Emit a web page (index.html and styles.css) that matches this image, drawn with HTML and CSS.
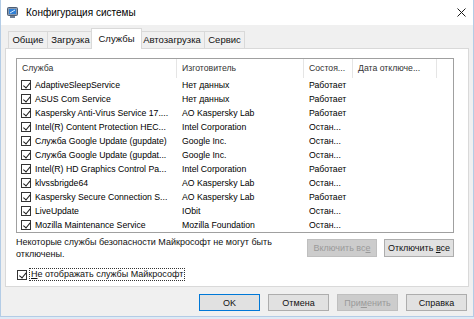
FILE: index.html
```html
<!DOCTYPE html>
<html lang="ru">
<head>
  <meta charset="UTF-8" />
  <meta name="viewport" content="width=device-width, initial-scale=1.0" />
  <title>Конфигурация системы</title>
  <link rel="stylesheet" href="styles.css">
</head>
<body>
  <div class="window">
    <div class="titlebar">
      <svg class="app-icon" width="11" height="11" viewBox="0 0 11 11">
        <rect x="0.5" y="0.5" width="10" height="8" rx="1" fill="#8a9bb0" stroke="#4d5d73"/>
        <rect x="2" y="2" width="7" height="5" fill="#2f7fd6"/>
        <path d="M3 6 L8 3" stroke="#d7ecff" stroke-width="1"/>
        <rect x="3" y="9" width="5" height="2" fill="#6f7f95"/>
      </svg>
      <span class="title">Конфигурация системы</span>
      <svg class="close" width="9" height="9" viewBox="0 0 9 9">
        <path d="M0.5 0.5 L8.5 8.5 M8.5 0.5 L0.5 8.5" stroke="#1a1a1a" stroke-width="1"/>
      </svg>
    </div>

    <div class="content">
      <div class="tabs">
        <div class="tab t-general">Общие</div>
        <div class="tab t-boot">Загрузка</div>
        <div class="tab t-services active">Службы</div>
        <div class="tab t-startup">Автозагрузка</div>
        <div class="tab t-tools">Сервис</div>
      </div>

      <div class="panel">
        <div class="listbox">
          <div class="list-head">
            <div class="col">Служба</div>
            <div class="col">Изготовитель</div>
            <div class="col">Состоя...</div>
            <div class="col">Дата отключе...</div>
            <div class="col last"></div>
          </div>
          <div class="row"><div class="cell name"><span class="check"></span>AdaptiveSleepService</div><div class="cell">Нет данных</div><div class="cell">Работает</div></div>
          <div class="row"><div class="cell name"><span class="check"></span>ASUS Com Service</div><div class="cell">Нет данных</div><div class="cell">Работает</div></div>
          <div class="row"><div class="cell name"><span class="check"></span>Kaspersky Anti-Virus Service 17....</div><div class="cell">AO Kaspersky Lab</div><div class="cell">Работает</div></div>
          <div class="row"><div class="cell name"><span class="check"></span>Intel(R) Content Protection HEC...</div><div class="cell">Intel Corporation</div><div class="cell">Остан...</div></div>
          <div class="row"><div class="cell name"><span class="check"></span>Служба Google Update (gupdate)</div><div class="cell">Google Inc.</div><div class="cell">Остан...</div></div>
          <div class="row"><div class="cell name"><span class="check"></span>Служба Google Update (gupdat...</div><div class="cell">Google Inc.</div><div class="cell">Остан...</div></div>
          <div class="row"><div class="cell name"><span class="check"></span>Intel(R) HD Graphics Control Pa...</div><div class="cell">Intel Corporation</div><div class="cell">Работает</div></div>
          <div class="row"><div class="cell name"><span class="check"></span>klvssbrigde64</div><div class="cell">AO Kaspersky Lab</div><div class="cell">Остан...</div></div>
          <div class="row"><div class="cell name"><span class="check"></span>Kaspersky Secure Connection S...</div><div class="cell">AO Kaspersky Lab</div><div class="cell">Работает</div></div>
          <div class="row"><div class="cell name"><span class="check"></span>LiveUpdate</div><div class="cell">IObit</div><div class="cell">Остан...</div></div>
          <div class="row"><div class="cell name"><span class="check"></span>Mozilla Maintenance Service</div><div class="cell">Mozilla Foundation</div><div class="cell">Остан...</div></div>
        </div>

        <div class="note-row">
          <div class="note">Некоторые службы безопасности Майкрософт не могут быть отключены.</div>
          <div class="note-buttons">
            <div class="btn disabled"><span>Включить вс<u>е</u></span></div>
            <div class="btn"><span>Отключить <u>в</u>се</span></div>
          </div>
        </div>

        <div class="hide-ms">
          <span class="check"></span>
          <span class="focus-label"><u>Н</u>е отображать службы Майкрософт</span>
        </div>
      </div>

      <div class="dialog-buttons">
        <div class="btn wide default"><span>OK</span></div>
        <div class="btn wide"><span>Отмена</span></div>
        <div class="btn wide disabled"><span>При<u>м</u>енить</span></div>
        <div class="btn wide"><span>Справка</span></div>
      </div>
    </div>
  </div>
</body>
</html>
```

FILE: styles.css
```css
body {
  margin: 0;
  background: #dfeaf5;
  font-family: 'Liberation Sans', Arial, sans-serif;
  color: #000;
}
.window {
  width: 472px;
  height: 316px;
  border: 1px solid #b3cce6;
  border-top: none;
  background: #f0f0f0;
  display: flex;
  flex-direction: column;
}
.titlebar {
  height: 25px;
  background: #fff;
  display: flex;
  align-items: center;
  padding: 0 7px 0 6px;
}
.app-icon {
  margin-right: 8px;
}
.title {
  font-size: 10px;
  flex: 1;
}
.content {
  flex: 1;
  padding: 3px 4px 0 4px;
}
.tabs {
  display: flex;
  align-items: flex-end;
  height: 20px;
  padding-left: 4px;
}
.tab {
  box-sizing: border-box;
  height: 17px;
  line-height: 16px;
  margin-left: -1px;
  border: 1px solid #d9d9d9;
  border-bottom: none;
  background: #f0f0f0;
  font-size: 9.5px;
  color: #111;
  text-align: center;
  white-space: nowrap;
}
.t-general { width: 40px; }
.t-boot { width: 47px; }
.t-services { width: 51px; }
.t-startup { width: 66px; }
.t-tools { width: 41px; }
.tab.active {
  position: relative;
  z-index: 1;
  height: 21px;
  line-height: 19px;
  margin: 0 -2px -1px -3px;
  background: #fff;
}
.panel {
  background: #fff;
  border: 1px solid #d9d9d9;
  padding: 9px 14px 5px 10px;
}
.listbox {
  border: 1px solid #a0a0a0;
  background: #fff;
  font-size: 8.7px;
}
.list-head, .row {
  display: grid;
  grid-template-columns: 160px 127px 49px 84px 1fr;
}
.list-head {
  height: 19px;
  line-height: 19px;
  color: #333;
}
.list-head .col {
  padding-left: 5px;
  border-right: 1px solid #e5e5e5;
  white-space: nowrap;
  overflow: hidden;
}
.list-head .col.last {
  border-right: none;
}
.row {
  height: 14px;
  line-height: 14px;
}
.cell {
  padding-left: 5px;
  white-space: nowrap;
  overflow: hidden;
}
.cell.name {
  display: flex;
  align-items: center;
  gap: 4px;
  padding-left: 4px;
}
.check {
  flex: none;
  box-sizing: border-box;
  width: 10px;
  height: 10px;
  border: 1px solid #333;
  background: #fff;
  position: relative;
}
.check::after {
  content: '';
  position: absolute;
  left: 2.5px;
  top: 0;
  width: 2.5px;
  height: 5.5px;
  border-right: 1px solid #1a1a1a;
  border-bottom: 1px solid #1a1a1a;
  transform: rotate(40deg);
}
.note-row {
  display: flex;
  margin-top: 3px;
  font-size: 9px;
  color: #111;
}
.note {
  width: 280px;
  line-height: 12px;
}
.note-buttons {
  margin-left: auto;
  margin-top: 3px;
  display: flex;
  gap: 7px;
}
.btn {
  box-sizing: border-box;
  width: 70px;
  height: 18px;
  display: flex;
  align-items: center;
  justify-content: center;
  border: 1px solid #adadad;
  background: #e1e1e1;
  font-size: 9px;
  color: #111;
  white-space: nowrap;
}
.btn.disabled {
  background: #cccccc;
  border-color: #bfbfbf;
  color: #9a9a9a;
}
.btn.default {
  border-color: #0078d7;
}
.hide-ms {
  display: flex;
  align-items: center;
  margin-top: 8px;
  padding-left: 1px;
  font-size: 9px;
  color: #111;
}
.focus-label {
  margin-left: 2px;
  padding: 0 1px;
  border: 1px dotted #333;
  line-height: 11px;
}
.dialog-buttons {
  display: flex;
  justify-content: flex-end;
  gap: 8px;
  margin-top: 7px;
  padding-right: 2px;
}
.btn.wide {
  width: 61px;
  height: 17px;
}
```
